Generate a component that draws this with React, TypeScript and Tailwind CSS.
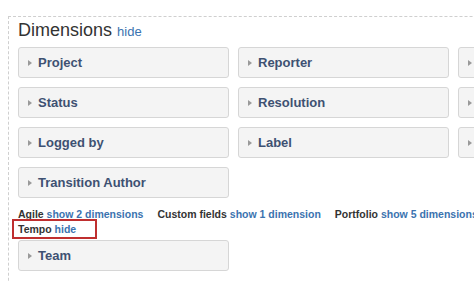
import React from 'react';

const ROWS: string[][] = [
  ['Project', 'Reporter', ''],
  ['Status', 'Resolution', ''],
  ['Logged by', 'Label', ''],
  ['Transition Author'],
];

const GROUPS = [
  { name: 'Agile', link: 'show 2 dimensions' },
  { name: 'Custom fields', link: 'show 1 dimension' },
  { name: 'Portfolio', link: 'show 5 dimensions' },
];

function DimensionBox({ label }: { label: string }) {
  return (
    <div className="w-[211px] h-[31px] shrink-0 bg-[#f4f4f4] border border-[#d6d6d6] rounded-[3px] flex items-center pl-[9px] gap-[6px]">
      <span className="w-0 h-0 border-y-[3.5px] border-y-transparent border-l-[4px] border-l-[#9a9a9a]"></span>
      <span className="text-[13px] font-bold text-[#3e5172] whitespace-nowrap">{label}</span>
    </div>
  );
}

export default function App() {
  return (
    <div
      className="w-[474px] h-[282px] overflow-hidden bg-white"
      style={{ fontFamily: '"Liberation Sans", Arial, sans-serif' }}
    >
      <div className="ml-2 mt-4 h-[300px] w-[600px] border-l border-t border-dashed border-[#cfcfcf] pl-[9px] pt-[2px]">
        {/* Heading */}
        <h2 className="text-[18px] leading-[22px] text-[#333] whitespace-nowrap">
          Dimensions <span className="text-[13px] text-[#3b73af]">hide</span>
        </h2>

        {/* Dimension grid */}
        <div className="mt-[4px] flex flex-col gap-[9px]">
          {ROWS.map((row, i) => (
            <div key={i} className="flex gap-[9px]">
              {row.map((label, j) => (
                <DimensionBox key={j} label={label} />
              ))}
            </div>
          ))}
        </div>

        {/* Other dimension groups */}
        <div className="mt-[9px] text-[10.5px] leading-[15px] font-bold whitespace-nowrap">
          <div className="flex gap-[14px]">
            {GROUPS.map((g) => (
              <span key={g.name}>
                <span className="text-[#333]">{g.name}</span>{' '}
                <span className="text-[#3b73af]">{g.link}</span>
              </span>
            ))}
          </div>
          <div className="relative">
            <span className="text-[#333]">Tempo</span>{' '}
            <span className="text-[#3b73af]">hide</span>
            <div className="absolute left-[-6px] top-[-3px] w-[85px] h-[20px] border-2 border-[#bf2f2f]"></div>
          </div>
        </div>

        <div className="mt-[3px]">
          <DimensionBox label="Team" />
        </div>
      </div>
    </div>
  );
}
